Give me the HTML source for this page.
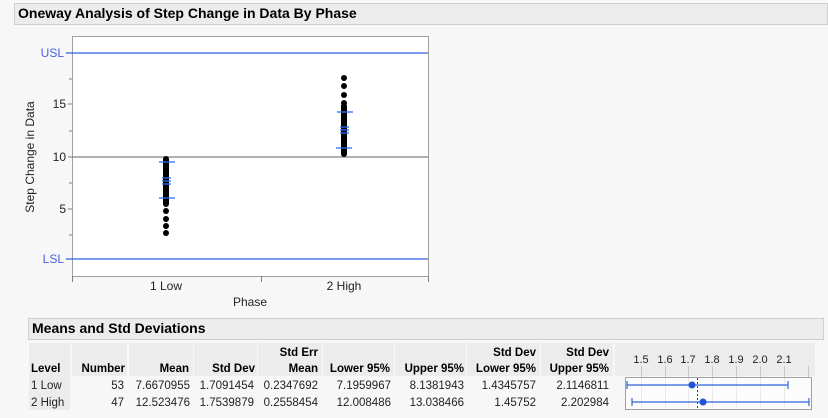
<!DOCTYPE html>
<html><head><style>
body{margin:0;width:828px;height:418px;background:#f7f7f7;font-family:"Liberation Sans",sans-serif;overflow:hidden;position:relative}
.hdr{position:absolute;background:#ececec;border:1px solid #cfcfcf;font-weight:bold;font-size:14px;color:#000;box-sizing:border-box;padding-left:3px;line-height:19px}
svg{position:absolute;left:0;top:0}
</style></head><body>
<div class="hdr" style="left:14px;top:3px;width:814px;height:22px">Oneway Analysis of Step Change in Data By Phase</div>
<div class="hdr" style="left:28px;top:318px;width:796px;height:22px">Means and Std Deviations</div>
<svg width="828" height="418" font-family="Liberation Sans, sans-serif" font-size="12">
<rect x="72.5" y="36.5" width="356" height="240" fill="#fff" stroke="#a0a0a0"/>
<line x1="66" y1="53" x2="428" y2="53" stroke="#2e63d9" stroke-width="1.2"/>
<line x1="66" y1="259" x2="428" y2="259" stroke="#2e63d9" stroke-width="1.2"/>
<line x1="72" y1="157" x2="428" y2="157" stroke="#808080" stroke-width="1.2"/>
<g stroke="#808080"><line x1="68" y1="104" x2="72" y2="104"/><line x1="68" y1="157" x2="72" y2="157"/><line x1="68" y1="209" x2="72" y2="209"/><line x1="69" y1="79" x2="72" y2="79"/><line x1="69" y1="131" x2="72" y2="131"/><line x1="69" y1="183" x2="72" y2="183"/><line x1="69" y1="235" x2="72" y2="235"/>
<line x1="72.5" y1="276" x2="72.5" y2="282"/><line x1="261.5" y1="276" x2="261.5" y2="282"/><line x1="428.5" y1="276" x2="428.5" y2="282"/></g>
<g fill="#4a5ee8" text-anchor="end"><text x="64" y="57">USL</text><text x="64" y="263">LSL</text></g>
<g fill="#222" text-anchor="end"><text x="66" y="108">15</text><text x="66" y="161">10</text><text x="66" y="213">5</text></g>
<text transform="translate(34,157) rotate(-90)" text-anchor="middle" fill="#222" font-size="12">Step Change in Data</text>
<text x="166" y="290" text-anchor="middle" fill="#222">1 Low</text>
<text x="344" y="290" text-anchor="middle" fill="#222">2 High</text>
<text x="250" y="306" text-anchor="middle" fill="#222">Phase</text>
<g fill="#000">
<rect x="163" y="156" width="6" height="51" rx="3"/>
<circle cx="166" cy="211" r="3"/><circle cx="166" cy="219" r="3"/><circle cx="166" cy="226" r="3"/><circle cx="166" cy="233" r="3"/>
<rect x="341" y="103" width="6" height="54" rx="3"/>
<circle cx="344" cy="78" r="3"/><circle cx="344" cy="86" r="3"/><circle cx="344" cy="95" r="3"/><circle cx="344" cy="103" r="3"/>
</g>
<g stroke="#2e6cf0" stroke-width="1.3">
<line x1="159" y1="162" x2="175" y2="162"/><line x1="159" y1="198" x2="175" y2="198"/>
<line x1="162" y1="178" x2="171" y2="178"/><line x1="162" y1="181" x2="171" y2="181"/><line x1="162" y1="184" x2="171" y2="184"/>
<line x1="337" y1="112" x2="353" y2="112"/><line x1="336" y1="148" x2="352" y2="148"/>
<line x1="340" y1="127" x2="349" y2="127"/><line x1="340" y1="130" x2="349" y2="130"/><line x1="340" y1="133" x2="349" y2="133"/>
</g>
<g fill="#ececec">
<rect x="29" y="343" width="41" height="67"/>
<rect x="72" y="343" width="55" height="33"/><rect x="129" y="343" width="64" height="33"/><rect x="194" y="343" width="63" height="33"/><rect x="258" y="343" width="64" height="33"/><rect x="323" y="343" width="71" height="33"/><rect x="395" y="343" width="71" height="33"/><rect x="467" y="343" width="73" height="33"/><rect x="541" y="343" width="72" height="33"/><rect x="615" y="343" width="200" height="33"/>
</g>
<g font-weight="bold" fill="#000" font-size="11.5" text-anchor="end">
<text x="31" y="372" style="text-anchor:start">Level</text>
<text x="125" y="372">Number</text><text x="189" y="372">Mean</text><text x="255" y="372">Std Dev</text>
<text x="318" y="356">Std Err</text><text x="318" y="372">Mean</text>
<text x="390" y="372">Lower 95%</text><text x="464" y="372">Upper 95%</text>
<text x="536" y="356">Std Dev</text><text x="536" y="372">Lower 95%</text>
<text x="609" y="356">Std Dev</text><text x="609" y="372">Upper 95%</text>
</g>
<g fill="#222" font-size="11.5" text-anchor="end">
<text x="31" y="389" text-anchor="start">1 Low</text><text x="31" y="406" text-anchor="start">2 High</text>
<text x="124" y="389">53</text><text x="190" y="389">7.6670955</text><text x="254" y="389">1.7091454</text><text x="318" y="389">0.2347692</text><text x="391" y="389">7.1959967</text><text x="464" y="389">8.1381943</text><text x="536" y="389">1.4345757</text><text x="609" y="389">2.1146811</text>
<text x="124" y="406">47</text><text x="190" y="406">12.523476</text><text x="254" y="406">1.7539879</text><text x="318" y="406">0.2558454</text><text x="391" y="406">12.008486</text><text x="464" y="406">13.038466</text><text x="536" y="406">1.45752</text><text x="609" y="406">2.202984</text>
</g>
<g fill="#222" font-size="11" text-anchor="middle">
<text x="641" y="363">1.5</text><text x="665" y="363">1.6</text><text x="688" y="363">1.7</text><text x="712" y="363">1.8</text><text x="736" y="363">1.9</text><text x="760" y="363">2.0</text><text x="784" y="363">2.1</text>
</g>
<g stroke="#c8c8c8"><line x1="641.5" y1="366" x2="641.5" y2="410"/><line x1="665.5" y1="366" x2="665.5" y2="410"/><line x1="688.5" y1="366" x2="688.5" y2="410"/><line x1="712.5" y1="366" x2="712.5" y2="410"/><line x1="736.5" y1="366" x2="736.5" y2="410"/><line x1="760.5" y1="366" x2="760.5" y2="410"/><line x1="784.5" y1="366" x2="784.5" y2="410"/><line x1="808.5" y1="366" x2="808.5" y2="377"/></g>
<rect x="625.5" y="377.5" width="186" height="32" fill="#fff" fill-opacity="0.6" stroke="#a0a0a0"/>
<line x1="697.5" y1="378" x2="697.5" y2="409" stroke="#444" stroke-dasharray="2,2"/>
<g stroke="#2e63d9" stroke-width="1.2">
<line x1="627" y1="385" x2="788" y2="385"/><line x1="627" y1="381" x2="627" y2="389"/><line x1="788" y1="381" x2="788" y2="389"/>
<line x1="632" y1="402" x2="809" y2="402"/><line x1="632" y1="398" x2="632" y2="406"/><line x1="809" y1="398" x2="809" y2="406"/>
</g>
<circle cx="692" cy="385" r="3.5" fill="#1f52d6"/><circle cx="703" cy="402" r="3.5" fill="#1f52d6"/>
</svg>
</body></html>
